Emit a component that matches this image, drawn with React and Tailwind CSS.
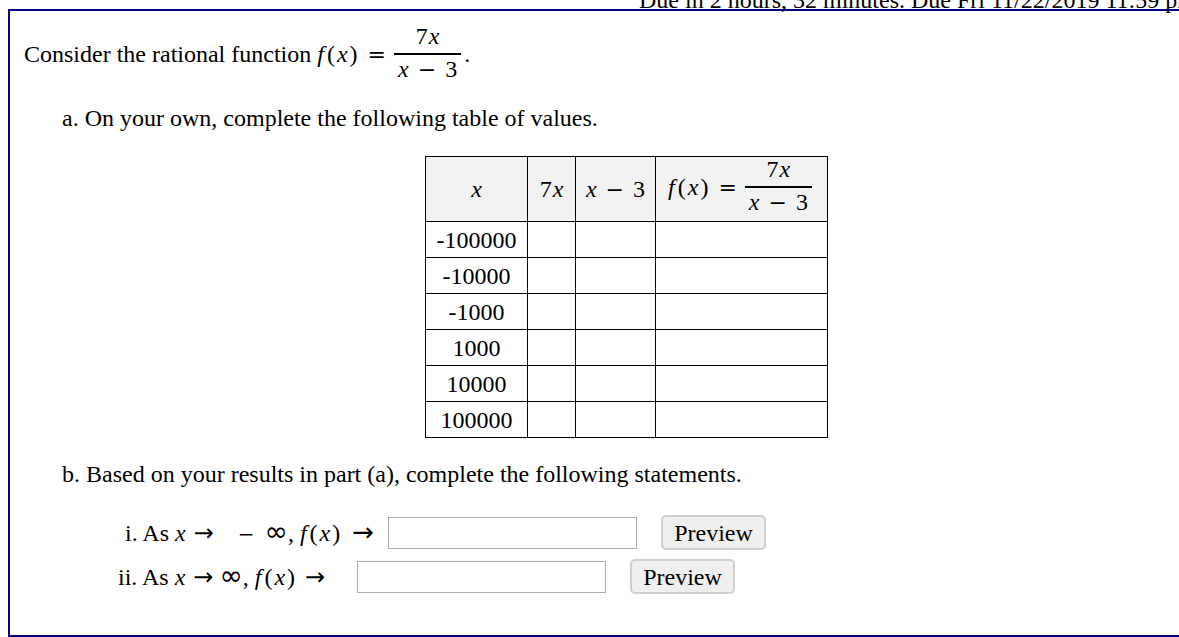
const serif = "font-['Liberation_Serif','Times_New_Roman','DejaVu_Serif',serif]"
const sym = "font-['DejaVu_Sans',sans-serif]"

function V({ children, className = '' }) {
  return <span className={`italic ${className}`}>{children}</span>
}

function Op({ children, className = '' }) {
  return <span className={`${sym} ${className}`}>{children}</span>
}

function Frac({ num, den }) {
  return (
    <span className="inline-flex flex-col items-center align-middle px-[3px]">
      <span className="leading-[24px] pb-[5px] px-[4px]">{num}</span>
      <span className="block h-[2px] w-full bg-black" />
      <span className="leading-[24px] pt-[2px] pb-[6px] px-[4px]">{den}</span>
    </span>
  )
}

const Xm3 = () => (
  <>
    <V>x</V>
    <Op className="mx-[9px] text-[22px]">−</Op>3
  </>
)

const SevenX = () => (
  <>
    7<V className="ml-[1px]">x</V>
  </>
)

const Fx = () => (
  <>
    <V className="mr-[3px]">f</V>(<V className="mx-[2px]">x</V>)
  </>
)

const rows = ['-100000', '-10000', '-1000', '1000', '10000', '100000']

function Statement({ pl, w, label }) {
  return (
    <div className={`flex items-center ${pl}`}>
      <span className={`whitespace-nowrap leading-[28px] ${w}`}>{label}</span>
      <input
        type="text"
        className="ml-[13px] h-[32px] w-[249px] border border-[#ababab] bg-white outline-none"
      />
      <button className="ml-[24px] h-[35px] w-[105px] rounded-[5px] border-2 border-[#cfcfcf] bg-[#efefef] text-[24px] leading-none text-black">
        Preview
      </button>
    </div>
  )
}

export default function App() {
  return (
    <div className={`${serif} w-[1179px] h-[637px] overflow-hidden bg-white text-[24px] text-black`}>
      <div className="h-[9px] flex items-end">
        <div className="-mb-[5px] pl-[639px] leading-[28px] whitespace-nowrap">
          Due in 2 hours, 32 minutes. Due Fri 11/22/2019 11:59 pm
        </div>
      </div>

      <div className="ml-[8px] w-[1200px] h-[628px] border-2 border-[#000080] bg-white">
        <p className="pl-[14px] pt-[13px] leading-[28px] whitespace-nowrap">
          Consider the rational function <Fx />
          <Op className="ml-[10px] mr-[5px] text-[22px]">=</Op>
          <Frac num={<SevenX />} den={<Xm3 />} />.
        </p>

        <p className="mt-[16px] pl-[52px] leading-[28px]">
          a. On your own, complete the following table of values.
        </p>

        <table className="mt-[24px] ml-[415px] w-[402px] table-fixed border-collapse text-center">
          <colgroup>
            <col className="w-[102px]" />
            <col className="w-[48px]" />
            <col className="w-[80px]" />
            <col className="w-[172px]" />
          </colgroup>
          <thead>
            <tr className="h-[65px] bg-[#f2f2f2]">
              <th className="border border-black font-normal">
                <V>x</V>
              </th>
              <th className="border border-black font-normal">
                <SevenX />
              </th>
              <th className="border border-black font-normal whitespace-nowrap">
                <Xm3 />
              </th>
              <th className="border border-black font-normal whitespace-nowrap">
                <Fx />
                <Op className="ml-[10px] mr-[5px] text-[22px]">=</Op>
                <Frac num={<SevenX />} den={<Xm3 />} />
              </th>
            </tr>
          </thead>
          <tbody>
            {rows.map((r) => (
              <tr key={r} className="h-[36px]">
                <td className="border border-black leading-[28px]">{r}</td>
                <td className="border border-black" />
                <td className="border border-black" />
                <td className="border border-black" />
              </tr>
            ))}
          </tbody>
        </table>

        <p className="mt-[22px] pl-[52px] leading-[28px]">
          b. Based on your results in part (a), complete the following statements.
        </p>

        <div className="mt-[27px] flex flex-col gap-[9px]">
          <Statement
            pl="pl-[115px]"
            w="w-[250px]"
            label={
              <>
                i. As <V>x</V>
                <Op className="ml-[8px] mr-[6px] text-[24px] leading-none">→</Op>
                <Op className="ml-[18px] mr-[10px] text-[20px]">−</Op>
                <Op className="text-[28px] leading-none">∞</Op>, <Fx />
                <Op className="ml-[12px] text-[26px] leading-none">→</Op>
              </>
            }
          />
          <Statement
            pl="pl-[108px]"
            w="w-[226px]"
            label={
              <>
                ii. As <V>x</V>
                <Op className="ml-[8px] mr-[6px] text-[24px] leading-none">→</Op>
                <Op className="text-[28px] leading-none">∞</Op>, <Fx />
                <Op className="ml-[10px] text-[24px] leading-none">→</Op>
              </>
            }
          />
        </div>
      </div>
    </div>
  )
}
